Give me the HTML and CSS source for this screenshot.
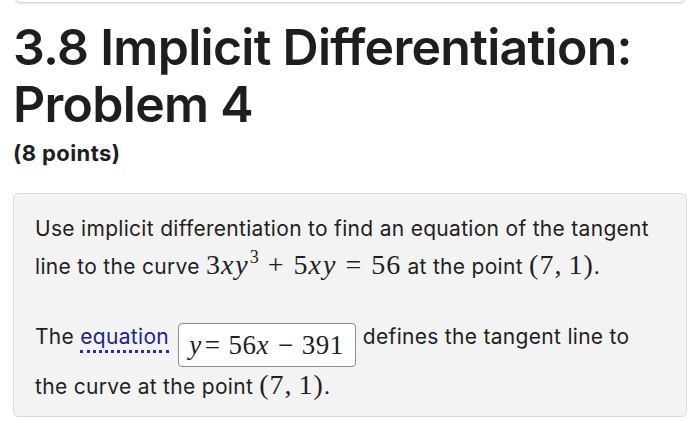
FILE: index.html
```html
<!DOCTYPE html>
<html>
<head>
<meta charset="utf-8">
<link rel="stylesheet" href="styles.css">
</head>
<body>
<div class="topbar"></div>
<main class="page">
  <h1 class="title">3.8 Implicit Differentiation: Problem 4</h1>
  <div class="points">(8 points)</div>
  <section class="card">
    <p class="para">Use implicit differentiation to find an equation of the tangent line to the curve <span class="math"><span class="n">3</span><i>xy</i><sup>3</sup><span class="op">+</span><span class="n">5</span><i>xy</i><span class="op">=</span><span class="n">56</span></span> at the point <span class="math">(7,<span class="sp"></span>1)</span>.</p>
    <p class="para second">The <span class="term">equation</span> <span class="answer"><i>y</i><span class="eq">=</span>56<i>x</i><span class="op">−</span>391</span> defines the tangent line to the curve at the point <span class="math">(7,<span class="sp"></span>1)</span>.</p>
  </section>
</main>
</body>
</html>
```
FILE: styles.css
```css
html, body {
  margin: 0;
  padding: 0;
  background: #ffffff;
}
body {
  font-family: Inter, "Liberation Sans", Arial, sans-serif;
  color: #1f1f1f;
  width: 700px;
  height: 423px;
  overflow: hidden;
}
.topbar {
  margin: -10px 15px 0 15px;
  height: 12px;
  background: #ffffff;
  border-radius: 0 0 6px 6px;
  box-shadow: 0 1px 3px rgba(0,0,0,0.25);
}
.page {
  padding: 0 13px;
}
.title {
  margin: 17px 0 0 0;
  font-size: 50px;
  line-height: 57px;
  font-weight: 600;
  letter-spacing: -0.7px;
  color: #1e1e1e;
}
.points {
  margin-top: 5px;
  font-size: 22px;
  line-height: 30px;
  font-weight: 700;
  letter-spacing: 0.4px;
  color: #1e1e1e;
}
.card {
  margin-top: 25px;
  background: #f3f3f3;
  border: 1px solid #dcdcdc;
  border-radius: 5px;
  padding: 17px 20px 15px 21px;
  height: 190px;
}
.para {
  margin: 0;
  font-size: 21px;
  line-height: 36px;
  color: #1f1f1f;
  letter-spacing: 0.3px;
}
.second {
  margin-top: 34px;
  line-height: 36px;
}
.math {
  font-family: "Liberation Serif", "Times New Roman", serif;
  font-size: 28px;
  letter-spacing: 1px;
}
.math i {
  font-style: italic;
  letter-spacing: 2px;
}
.math sup {
  font-size: 18px;
  vertical-align: 11px;
  line-height: 0;
}
.op {
  margin: 0 9px 0 8px;
}
.sp {
  display: inline-block;
  width: 6px;
}
.term {
  color: #23238e;
  border-bottom: 3px dotted #2a2ab0;
  padding-bottom: 1px;
}
.answer {
  display: inline-block;
  font-family: "Liberation Serif", "Times New Roman", serif;
  font-size: 27px;
  line-height: 42px;
  letter-spacing: 0.5px;
  background: #ffffff;
  border: 1px solid #8c8c8c;
  border-radius: 4px;
  padding: 0 11px 0 10px;
  margin: 0 1px 0 3px;
  vertical-align: -10px;
}
.answer i {
  letter-spacing: 1.5px;
}
.answer .eq, .answer .op {
  margin: 0 8px;
}
.answer .eq {
  margin-left: 2px;
}
```
